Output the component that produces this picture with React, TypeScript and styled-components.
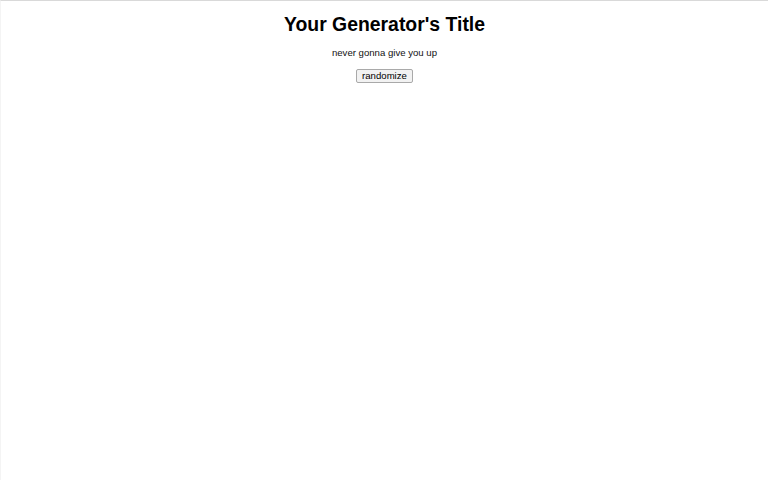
import React, { useState } from 'react';
import styled, { createGlobalStyle } from 'styled-components';

const phrases = [
  'never gonna give you up',
  'never gonna let you down',
  'never gonna run around',
  'and desert you',
];

const GlobalStyle = createGlobalStyle`
  html, body {
    margin: 0;
    padding: 0;
    background: #ffffff;
  }
  body {
    font-family: "Liberation Sans", Arial, sans-serif;
    color: #000000;
  }
`;

const Page = styled.div`
  box-sizing: border-box;
  height: 480px;
  border-top: 1px solid #d9d9d9;
  border-left: 1px solid #f4f4f4;
  display: flex;
  flex-direction: column;
  align-items: center;
`;

const Title = styled.h1`
  margin: 12px 0 0;
  font-size: 19.4px;
  line-height: 23px;
  font-weight: 700;
`;

const Phrase = styled.p`
  margin: 11px 0 0;
  font-size: 9.6px;
  line-height: 12px;
  color: #111111;
`;

const RandomButton = styled.button`
  margin-top: 10px;
  font-family: "Liberation Sans", Arial, sans-serif;
  font-size: 9.6px;
  line-height: 10px;
  padding: 1px 5px;
  color: #000000;
  background: #f2f2f2;
  border: 1px solid #a9a9a9;
  border-radius: 2px;
`;

export default function App() {
  const [index, setIndex] = useState(0);
  return (
    <>
      <GlobalStyle />
      <Page>
        <Title>Your Generator's Title</Title>
        <Phrase>{phrases[index]}</Phrase>
        <RandomButton onClick={() => setIndex(Math.floor(Math.random() * phrases.length))}>
          randomize
        </RandomButton>
      </Page>
    </>
  );
}
